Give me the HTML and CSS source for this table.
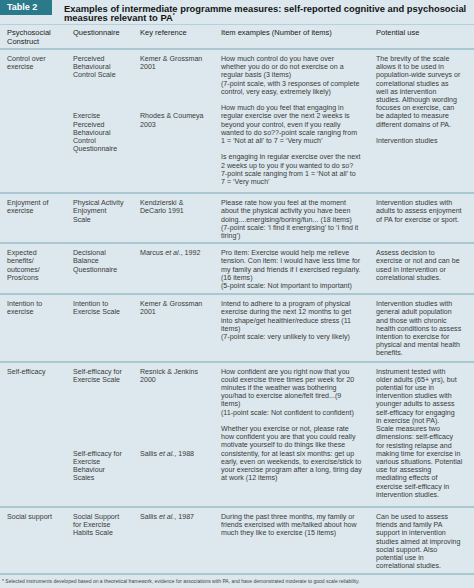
FILE: index.html
```html
<!DOCTYPE html>
<html>
<head>
<meta charset="utf-8">
<link rel="stylesheet" href="styles.css">
</head>
<body>
<div class="page">
  <div class="caption">
    <div class="tab">Table 2</div>
    <div class="title">Examples of intermediate programme measures: self-reported cognitive and psychosocial<br>measures relevant to PA<sup>*</sup></div>
  </div>
  <div class="row head">
    <div class="cell">Psychosocial<br>Construct</div>
    <div class="cell">Questionnaire</div>
    <div class="cell">Key reference</div>
    <div class="cell">Item examples (Number of items)</div>
    <div class="cell">Potential use</div>
  </div>
  <div class="row tall1">
    <div class="cell">Control over<br>exercise</div>
    <div class="cell"><p>Perceived<br>Behavioural<br>Control Scale</p><p class="skip4">Exercise<br>Perceived<br>Behavioural<br>Control<br>Questionnaire</p></div>
    <div class="cell"><p>Kemer &amp; Grossman<br>2001</p><p class="skip5">Rhodes &amp; Coumeya<br>2003</p></div>
    <div class="cell"><p>How much control do you have over<br>whether you do or do not exercise on a<br>regular basis (3 items)<br>(7-point scale, with 3 responses of complete<br>control, very easy, extremely likely)</p><p class="gap">How much do you feel that engaging in<br>regular exercise over the next 2 weeks is<br>beyond your control, even if you really<br>wanted to do so??-point scale ranging from<br>1 = ‘Not at all’ to 7 = ‘Very much’</p><p class="gap">Is engaging in regular exercise over the next<br>2 weeks up to you if you wanted to do so?<br>7-point scale ranging from 1 = ‘Not at all’ to<br>7 = ‘Very much’</p></div>
    <div class="cell"><p>The brevity of the scale<br>allows it to be used in<br>population-wide surveys or<br>correlational studies as<br>well as intervention<br>studies. Although wording<br>focuses on exercise, can<br>be adapted to measure<br>different domains of PA.</p><p class="gap">Intervention studies</p></div>
  </div>
  <div class="row mid">
    <div class="cell">Enjoyment of<br>exercise</div>
    <div class="cell">Physical Activity<br>Enjoyment<br>Scale</div>
    <div class="cell">Kendzierski &amp;<br>DeCarlo 1991</div>
    <div class="cell">Please rate how you feel at the moment<br>about the physical activity you have been<br>doing....energising/boring/fun... (18 items)<br>(7-point scale: ‘I find it energising’ to ‘I find it<br>tiring’)</div>
    <div class="cell">Intervention studies with<br>adults to assess enjoyment<br>of PA for exercise or sport.</div>
  </div>
  <div class="row">
    <div class="cell">Expected<br>benefits/<br>outcomes/<br>Pros/cons</div>
    <div class="cell">Decisional<br>Balance<br>Questionnaire</div>
    <div class="cell">Marcus <i>et al.</i>, 1992</div>
    <div class="cell">Pro item: Exercise would help me relieve<br>tension. Con item: I would have less time for<br>my family and friends if I exercised regularly.<br>(16 items)<br>(5-point scale: Not important to important)</div>
    <div class="cell">Assess decision to<br>exercise or not and can be<br>used in intervention or<br>correlational studies.</div>
  </div>
  <div class="row">
    <div class="cell">Intention to<br>exercise</div>
    <div class="cell">Intention to<br>Exercise Scale</div>
    <div class="cell">Kemer &amp; Grossman<br>2001</div>
    <div class="cell">Intend to adhere to a program of physical<br>exercise during the next 12 months to get<br>into shape/get healthier/reduce stress (11<br>items)<br>(7-point scale: very unlikely to very likely)</div>
    <div class="cell">Intervention studies with<br>general adult population<br>and those with chronic<br>health conditions to assess<br>intention to exercise for<br>physical and mental health<br>benefits.</div>
  </div>
  <div class="row tall2">
    <div class="cell">Self-efficacy</div>
    <div class="cell"><p>Self-efficacy for<br>Exercise Scale</p><p class="skip8">Self-efficacy for<br>Exercise<br>Behaviour<br>Scales</p></div>
    <div class="cell"><p>Resnick &amp; Jenkins<br>2000</p><p class="skip8">Sallis <i>et al.</i>, 1988</p></div>
    <div class="cell"><p>How confident are you right now that you<br>could exercise three times per week for 20<br>minutes if the weather was bothering<br>you/had to exercise alone/felt tired...(9<br>items)<br>(11-point scale: Not confident to confident)</p><p class="gap">Whether you exercise or not, please rate<br>how confident you are that you could really<br>motivate yourself to do things like these<br>consistently, for at least six months: get up<br>early, even on weekends, to exercise/stick to<br>your exercise program after a long, tiring day<br>at work (12 items)</p></div>
    <div class="cell">Instrument tested with<br>older adults (65+ yrs), but<br>potential for use in<br>intervention studies with<br>younger adults to assess<br>self-efficacy for engaging<br>in exercise (not PA).<br>Scale measures two<br>dimensions: self-efficacy<br>for resisting relapse and<br>making time for exercise in<br>various situations. Potential<br>use for assessing<br>mediating effects of<br>exercise self-efficacy in<br>intervention studies.</div>
  </div>
  <div class="row">
    <div class="cell">Social support</div>
    <div class="cell">Social Support<br>for Exercise<br>Habits Scale</div>
    <div class="cell">Sallis <i>et al.</i>, 1987</div>
    <div class="cell">During the past three months, my family or<br>friends exercised with me/talked about how<br>much they like to exercise (15 items)</div>
    <div class="cell">Can be used to assess<br>friends and family PA<br>support in intervention<br>studies aimed at improving<br>social support. Also<br>potential use in<br>correlational studies.</div>
  </div>
  <div class="foot">* Selected instruments developed based on a theoretical framework, evidence for associations with PA, and have demonstrated moderate to good scale reliability.</div>
</div>
</body>
</html>
```
FILE: styles.css
```css
html, body {
  margin: 0;
  padding: 0;
  background: #dce8ed;
}
.page {
  width: 474px;
  height: 588px;
  overflow: hidden;
  background: #dce8ed;
  font-family: "Liberation Sans", Arial, sans-serif;
  color: #3a3a3a;
  --lh: 8.2px;
}
.caption {
  display: flex;
  align-items: flex-start;
  height: 24px;
  border-bottom: 1px solid #b4d0d8;
}
.tab {
  width: 52px;
  height: 15px;
  box-sizing: border-box;
  padding: 2px 0 0 7px;
  background: #2b7a8c;
  color: #fff;
  font-weight: bold;
  font-size: 9px;
  line-height: 11px;
}
.title {
  margin-left: 12px;
  padding-top: 3.5px;
  font-weight: bold;
  font-size: 9.4px;
  line-height: 9.5px;
  color: #151515;
}
.title sup {
  font-size: 5px;
  vertical-align: top;
  line-height: 5px;
}
.row {
  display: grid;
  grid-template-columns: 66px 67px 81px 155px 1fr;
  padding: 5px 0 3px 7px;
  border-bottom: 2px solid #a9c8d1;
  font-size: 7.1px;
  line-height: var(--lh);
}
.row.head {
  padding: 3px 0 2px 7px;
  font-size: 7.5px;
  line-height: 9px;
  color: #222;
}
.row.tall1 {
  padding-bottom: 6px;
}
.row.mid {
  padding-bottom: 2px;
}
.row.tall2 {
  padding-bottom: 7px;
}
.cell p {
  margin: 0;
}
.cell p.gap {
  margin-top: var(--lh);
}
.cell p.skip4 {
  margin-top: calc(var(--lh) * 4);
}
.cell p.skip5 {
  margin-top: calc(var(--lh) * 5);
}
.cell p.skip8 {
  margin-top: calc(var(--lh) * 8);
}
.foot {
  padding: 3px 0 0 2px;
  font-size: 5px;
  line-height: 6px;
  color: #444;
  white-space: nowrap;
}
```
